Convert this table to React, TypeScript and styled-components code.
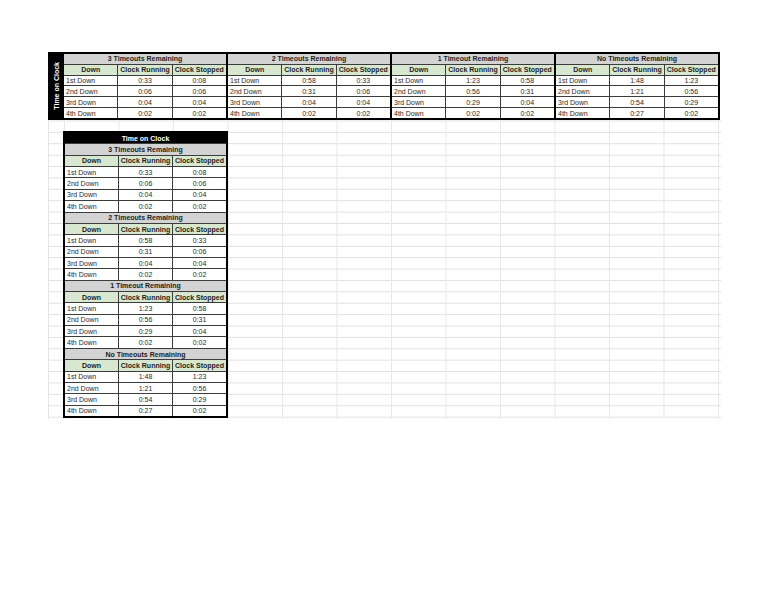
import React from 'react';
import styled, { createGlobalStyle } from 'styled-components';

const Global = createGlobalStyle`
  html, body { margin: 0; padding: 0; background: #ffffff; }
  body { font-family: "Liberation Sans", Arial, sans-serif; }
`;

type Row = [string, string, string];
interface Section { title: string; rows: Row[] }

const sections: Section[] = [
  { title: '3 Timeouts Remaining', rows: [['1st Down', '0:33', '0:08'], ['2nd Down', '0:06', '0:06'], ['3rd Down', '0:04', '0:04'], ['4th Down', '0:02', '0:02']] },
  { title: '2 Timeouts Remaining', rows: [['1st Down', '0:58', '0:33'], ['2nd Down', '0:31', '0:06'], ['3rd Down', '0:04', '0:04'], ['4th Down', '0:02', '0:02']] },
  { title: '1 Timeout Remaining', rows: [['1st Down', '1:23', '0:58'], ['2nd Down', '0:56', '0:31'], ['3rd Down', '0:29', '0:04'], ['4th Down', '0:02', '0:02']] },
  { title: 'No Timeouts Remaining', rows: [['1st Down', '1:48', '1:23'], ['2nd Down', '1:21', '0:56'], ['3rd Down', '0:54', '0:29'], ['4th Down', '0:27', '0:02']] },
];

const Page = styled.div`
  width: 768px;
  height: 594px;
  padding: 52px 0 0 48px;
  box-sizing: border-box;
  overflow: hidden;
`;

const TopRow = styled.div`
  display: flex;
  width: 672px;
  height: 68px;
`;

const SideBar = styled.div`
  width: 16px;
  flex: none;
  background: #000;
  display: flex;
  align-items: center;
  justify-content: center;
`;

const SideText = styled.span`
  writing-mode: vertical-rl;
  transform: rotate(180deg);
  color: #fff;
  font-weight: 700;
  font-size: 7px;
  white-space: nowrap;
`;

const Block = styled.div`
  width: 164px;
  flex: none;
  box-sizing: border-box;
  border: 2px solid #000;
  border-left: 0;
  display: grid;
  grid-template-columns: repeat(3, 1fr);
  grid-template-rows: repeat(6, 1fr);
  gap: 1px;
  background: #3c3c3c;
`;

type Kind = 'black' | 'title' | 'head' | 'data';

const Cell = styled.div<{ $kind: Kind; $left?: boolean; $span?: boolean }>`
  grid-column: ${p => (p.$span ? '1 / -1' : 'auto')};
  display: flex;
  align-items: center;
  justify-content: ${p => (p.$left ? 'flex-start' : 'center')};
  padding: 0 2px;
  font-size: 7px;
  line-height: 1;
  white-space: nowrap;
  overflow: hidden;
  font-weight: ${p => (p.$kind === 'data' ? 400 : 700)};
  color: ${p => (p.$kind === 'black' ? '#ffffff' : p.$kind === 'data' ? '#2a2a2a' : '#1e1e1e')};
  background: ${p =>
    p.$kind === 'black' ? '#000000' : p.$kind === 'title' ? '#d3d3d3' : p.$kind === 'head' ? '#d8e8d0' : '#ffffff'};
`;

const Sheet = styled.div`
  width: 673px;
  height: 299px;
  box-sizing: border-box;
  padding: 11px 0 0 15px;
  background-image:
    linear-gradient(to right, #e4e4e4 1px, transparent 1px),
    linear-gradient(to right, #e8e8e8 1px, transparent 1px),
    linear-gradient(to bottom, #e0e0e0 1px, transparent 1px);
  background-size: 100% 100%, 54.5px 100%, 100% 11.4px;
  background-position: 0 0, 16px 0, 0 0.5px;
  background-repeat: no-repeat, repeat-x, repeat-y;
`;

const BigTable = styled.div`
  width: 165px;
  height: 287px;
  box-sizing: border-box;
  border: 2px solid #000;
  display: grid;
  grid-template-columns: repeat(3, 1fr);
  grid-template-rows: repeat(25, 1fr);
  gap: 1px;
  background: #3c3c3c;
`;

const SectionCells: React.FC<{ s: Section }> = ({ s }) => (
  <>
    <Cell $kind="title" $span>{s.title}</Cell>
    <Cell $kind="head">Down</Cell>
    <Cell $kind="head">Clock Running</Cell>
    <Cell $kind="head">Clock Stopped</Cell>
    {s.rows.map(r => (
      <React.Fragment key={r[0]}>
        <Cell $kind="data" $left>{r[0]}</Cell>
        <Cell $kind="data">{r[1]}</Cell>
        <Cell $kind="data">{r[2]}</Cell>
      </React.Fragment>
    ))}
  </>
);

export default function App() {
  return (
    <>
      <Global />
      <Page>
        <TopRow>
          <SideBar>
            <SideText>Time on Clock</SideText>
          </SideBar>
          {sections.map(s => (
            <Block key={s.title}>
              <SectionCells s={s} />
            </Block>
          ))}
        </TopRow>
        <Sheet>
          <BigTable>
            <Cell $kind="black" $span>Time on Clock</Cell>
            {sections.map(s => (
              <SectionCells key={s.title} s={s} />
            ))}
          </BigTable>
        </Sheet>
      </Page>
    </>
  );
}
